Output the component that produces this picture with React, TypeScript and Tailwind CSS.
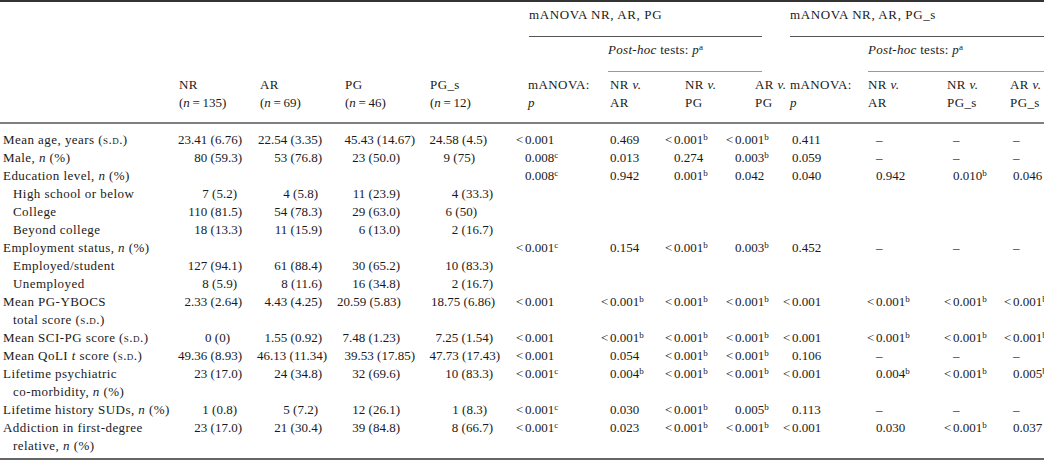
import React from "react";

type Val = string | [string, string];

type Row = {
  label: React.ReactNode;
  vals?: Val[];
  p?: string[];
};

const sd = <span className="[font-variant-caps:small-caps]">s.d.</span>;
const n = <i>n</i>;

const countPad = ["pr-[10px]", "pr-[15px]", "pr-[22px]", "pr-[17px]"];
const pPad = [
  "pl-[15px]",
  "pl-[10px]",
  "pl-[4px]",
  "pl-[7px]",
  "pl-[10px]",
  "pl-[16px]",
  "pl-[13px]",
  "pl-[9px]",
];

const rows: Row[] = [
  {
    label: <>Mean age, years ({sd})</>,
    vals: ["23.41 (6.76)", "22.54 (3.35)", ["45.43 (14.67)", "-mr-[15px]"], ["24.58 (4.5)", "mr-[6px]"]],
    p: ["<0.001", "0.469", "<0.001b", "<0.001b", "0.411", "–", "–", "–"],
  },
  {
    label: <>Male, {n} (%)</>,
    vals: ["80 (59.3)", "53 (76.8)", "23 (50.0)", ["9 (75)", "mr-[18px]"]],
    p: ["0.008c", "0.013", "0.274", "0.003b", "0.059", "–", "–", "–"],
  },
  {
    label: <>Education level, {n} (%)</>,
    p: ["0.008c", "0.942", "0.001b", "0.042", "0.040", "0.942", "0.010b", "0.046"],
  },
  {
    label: <div className="pl-[10px]">High school or below</div>,
    vals: [["7 (5.2)", "mr-[5px]"], ["4 (5.8)", "mr-[4px]"], "11 (23.9)", "4 (33.3)"],
  },
  {
    label: <div className="pl-[10px]">College</div>,
    vals: ["110 (81.5)", "54 (78.3)", "29 (63.0)", ["6 (50)", "mr-[16px]"]],
  },
  {
    label: <div className="pl-[10px]">Beyond college</div>,
    vals: ["18 (13.3)", "11 (15.9)", "6 (13.0)", "2 (16.7)"],
  },
  {
    label: <>Employment status, {n} (%)</>,
    p: ["<0.001c", "0.154", "<0.001b", "0.003b", "0.452", "–", "–", "–"],
  },
  {
    label: <div className="pl-[10px]">Employed/student</div>,
    vals: ["127 (94.1)", "61 (88.4)", "30 (65.2)", "10 (83.3)"],
  },
  {
    label: <div className="pl-[10px]">Unemployed</div>,
    vals: [["8 (5.9)", "mr-[5px]"], "8 (11.6)", "16 (34.8)", "2 (16.7)"],
  },
  {
    label: (
      <>
        <div>Mean PG-YBOCS</div>
        <div className="pl-[10px]">total score ({sd})</div>
      </>
    ),
    vals: ["2.33 (2.64)", "4.43 (4.25)", "20.59 (5.83)", ["18.75 (6.86)", "-mr-[2px]"]],
    p: ["<0.001", "<0.001b", "<0.001b", "<0.001b", "<0.001", "<0.001b", "<0.001b", "<0.001b"],
  },
  {
    label: <>Mean SCI-PG score ({sd})</>,
    vals: [["0 (0)", "mr-[12px]"], "1.55 (0.92)", "7.48 (1.23)", "7.25 (1.54)"],
    p: ["<0.001", "<0.001b", "<0.001b", "<0.001b", "<0.001", "<0.001b", "<0.001b", "<0.001b"],
  },
  {
    label: (
      <>
        Mean QoLI <i>t</i> score ({sd})
      </>
    ),
    vals: ["49.36 (8.93)", ["46.13 (11.34)", "-mr-[5px]"], ["39.53 (17.85)", "-mr-[15px]"], ["47.73 (17.43)", "-mr-[7px]"]],
    p: ["<0.001", "0.054", "<0.001b", "<0.001b", "0.106", "–", "–", "–"],
  },
  {
    label: (
      <>
        <div>Lifetime psychiatric</div>
        <div className="pl-[10px]">co-morbidity, {n} (%)</div>
      </>
    ),
    vals: ["23 (17.0)", "24 (34.8)", "32 (69.6)", "10 (83.3)"],
    p: ["<0.001c", "0.004b", "<0.001b", "<0.001b", "<0.001", "0.004b", "<0.001b", "0.005b"],
  },
  {
    label: <>Lifetime history SUDs, {n} (%)</>,
    vals: [["1 (0.8)", "mr-[5px]"], ["5 (7.2)", "mr-[4px]"], "12 (26.1)", ["1 (8.3)", "mr-[6px]"]],
    p: ["<0.001c", "0.030", "<0.001b", "0.005b", "0.113", "–", "–", "–"],
  },
  {
    label: (
      <>
        <div>Addiction in first-degree</div>
        <div className="pl-[10px]">relative, {n} (%)</div>
      </>
    ),
    vals: ["23 (17.0)", "21 (30.4)", "39 (84.8)", "8 (66.7)"],
    p: ["<0.001c", "0.023", "<0.001b", "<0.001b", "<0.001", "0.030", "<0.001b", "0.037"],
  },
];

function PVal({ v }: { v: string }) {
  const m = v.match(/^(<)?([^a-c]+)([a-c])?$/);
  if (!m) return <>{v}</>;
  return (
    <span className="whitespace-nowrap">
      {m[1] && <span className="inline-block w-[9px] -ml-[9px]">&lt;</span>}
      {m[2]}
      {m[3] && <sup className="text-[9px]">{m[3]}</sup>}
    </span>
  );
}

function Count({ v }: { v: Val }) {
  if (typeof v === "string") return <span className="whitespace-nowrap">{v}</span>;
  return <span className={"inline-block whitespace-nowrap " + v[1]}>{v[0]}</span>;
}

function GroupHead({ n: count, name }: { n: string; name: string }) {
  return (
    <>
      <div className="tracking-[0.4px]">{name}</div>
      <div>
        (<i>n</i>&#8201;=&#8201;{count})
      </div>
    </>
  );
}

export default function App() {
  return (
    <div className="w-[1044px] h-[460px] overflow-hidden bg-white text-[#1a1a1a] font-['Liberation_Serif',serif] text-[13px] leading-[18px]">
      <div className="border-t-2 border-[#333]">
        <table className="w-[1044px] table-fixed">
          <colgroup>
            <col className="w-[170px]" />
            <col className="w-[82px]" />
            <col className="w-[85px]" />
            <col className="w-[85px]" />
            <col className="w-[88px]" />
            <col className="w-[90px]" />
            <col className="w-[70px]" />
            <col className="w-[58px]" />
            <col className="w-[54px]" />
            <col className="w-[78px]" />
            <col className="w-[80px]" />
            <col className="w-[64px]" />
            <col className="w-[40px]" />
          </colgroup>
          <thead className="border-b-2 border-[#808080]">
            <tr>
              <th rowSpan={3} />
              <th rowSpan={3} className="align-bottom text-left font-normal pl-[9px] pb-[10px]">
                <GroupHead n="135" name="NR" />
              </th>
              <th rowSpan={3} className="align-bottom text-left font-normal pl-[8px] pb-[10px]">
                <GroupHead n="69" name="AR" />
              </th>
              <th rowSpan={3} className="align-bottom text-left font-normal pl-[8px] pb-[10px]">
                <GroupHead n="46" name="PG" />
              </th>
              <th rowSpan={3} className="align-bottom text-left font-normal pl-[8px] pb-[10px]">
                <GroupHead n="12" name="PG_s" />
              </th>
              <th colSpan={4} className="align-top text-left font-normal pt-[4px]">
                <div className="ml-[19px] mr-[20px] pb-[12px] border-b border-[#555] whitespace-nowrap tracking-[0.6px]">
                  mANOVA NR, AR, PG
                </div>
              </th>
              <th colSpan={4} className="align-top text-left font-normal pt-[4px]">
                <div className="ml-[8px] pb-[12px] border-b border-[#555] whitespace-nowrap tracking-[0.6px]">
                  mANOVA NR, AR, PG_s
                </div>
              </th>
            </tr>
            <tr>
              <th />
              <th colSpan={3} className="align-top text-left font-normal pt-[4px]">
                <div className="ml-[8px] mr-[20px] pb-[12px] border-b border-[#9a9a9a] whitespace-nowrap tracking-[0.3px]">
                  <i>Post-hoc</i> tests: <i>p</i>
                  <sup className="text-[9px]">a</sup>
                </div>
              </th>
              <th />
              <th colSpan={3} className="align-top text-left font-normal pt-[4px]">
                <div className="ml-[8px] pb-[12px] border-b border-[#9a9a9a] whitespace-nowrap tracking-[0.3px]">
                  <i>Post-hoc</i> tests: <i>p</i>
                  <sup className="text-[9px]">a</sup>
                </div>
              </th>
            </tr>
            <tr className="[&>th]:align-top [&>th]:text-left [&>th]:font-normal [&>th]:pt-[4px] [&>th]:pb-[10px] [&>th]:whitespace-nowrap [&>th]:tracking-[0.4px]">
              <th className="pl-[18px]">
                <div>mANOVA:</div>
                <div>
                  <i>p</i>
                </div>
              </th>
              <th className="pl-[10px]">
                <div>
                  NR <i>v.</i>
                </div>
                <div>AR</div>
              </th>
              <th className="pl-[15px]">
                <div>
                  NR <i>v.</i>
                </div>
                <div>PG</div>
              </th>
              <th className="pl-[27px]">
                <div>
                  AR <i>v.</i>
                </div>
                <div>PG</div>
              </th>
              <th className="pl-[8px]">
                <div>mANOVA:</div>
                <div>
                  <i>p</i>
                </div>
              </th>
              <th className="pl-[8px]">
                <div>
                  NR <i>v.</i>
                </div>
                <div>AR</div>
              </th>
              <th className="pl-[7px]">
                <div>
                  NR <i>v.</i>
                </div>
                <div>PG_s</div>
              </th>
              <th className="pl-[6px]">
                <div>
                  AR <i>v.</i>
                </div>
                <div>PG_s</div>
              </th>
            </tr>
          </thead>
          <tbody className="border-b-2 border-[#666]">
            {rows.map((r, i) => {
              const edge = i === 0 ? "pt-[7px]" : i === rows.length - 1 ? "pb-[3px]" : "";
              return (
                <tr key={i}>
                  <td className={"align-top pl-[3px] whitespace-nowrap tracking-[0.45px] " + edge}>{r.label}</td>
                  {[0, 1, 2, 3].map((c) => (
                    <td key={c} className={"align-top text-right " + countPad[c] + " " + edge}>
                      {r.vals && <Count v={r.vals[c]} />}
                    </td>
                  ))}
                  {pPad.map((pad, c) => (
                    <td key={c} className={"align-top text-left whitespace-nowrap " + pad + " " + edge}>
                      {r.p && <PVal v={r.p[c]} />}
                    </td>
                  ))}
                </tr>
              );
            })}
          </tbody>
        </table>
      </div>
    </div>
  );
}
